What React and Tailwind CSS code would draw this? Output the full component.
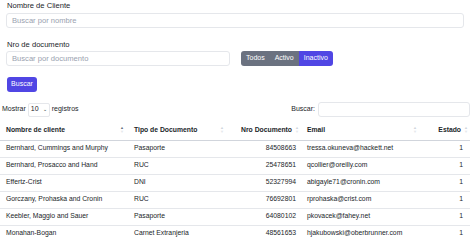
import React from 'react';

const rows = [
  ['Bernhard, Cummings and Murphy', 'Pasaporte', '84508663', 'tressa.okuneva@hackett.net', '1'],
  ['Bernhard, Prosacco and Hand', 'RUC', '25478651', 'qcollier@oreilly.com', '1'],
  ['Effertz-Crist', 'DNI', '52327994', 'abigayle71@cronin.com', '1'],
  ['Gorczany, Prohaska and Cronin', 'RUC', '76692801', 'rprohaska@crist.com', '1'],
  ['Keebler, Maggio and Sauer', 'Pasaporte', '64080102', 'pkovacek@fahey.net', '1'],
  ['Monahan-Bogan', 'Carnet Extranjeria', '48561653', 'hjakubowski@oberbrunner.com', '1'],
];

const SortIcon = ({ active }) => (
  <span className="flex flex-col items-center leading-none text-[4px]">
    <span className={active ? 'text-gray-500' : 'text-gray-300'}>▲</span>
    <span className="text-gray-200">▼</span>
  </span>
);

const App = () => {
  return (
    <div className="w-[474px] h-[242px] overflow-hidden bg-white text-[#212529] text-[7px] font-['Liberation_Sans',Arial,sans-serif]">
      <div className="pl-[6px] pr-[10px] pt-[1px] text-[7.6px]">
        <div className="pl-[1px] h-[12px] leading-[10px]">Nombre de Cliente</div>
        <div className="h-[15px] w-[458px] border border-gray-200 rounded-[3px] flex items-center px-[5px] text-gray-400">Buscar por nombre</div>
        <div className="pl-[1px] mt-[12px] h-[11px] leading-[10px]">Nro de documento</div>
        <div className="flex items-center gap-[11px]">
          <div className="h-[15px] w-[224px] border border-gray-200 rounded-[3px] flex items-center px-[5px] text-gray-400">Buscar por documento</div>
          <div className="flex h-[15px] rounded-[3px] overflow-hidden text-white text-[7px]">
            <span className="bg-[#6b7280] px-[5px] flex items-center">Todos</span>
            <span className="bg-[#6b7280] px-[5px] flex items-center">Activo</span>
            <span className="bg-[#5046e4] px-[5px] flex items-center">Inactivo</span>
          </div>
        </div>
        <button className="mt-[11px] ml-[1px] h-[15px] w-[30px] bg-[#5046e4] text-white rounded-[3px] flex items-center justify-center text-[7px]">Buscar</button>
      </div>
      <div className="flex items-center justify-between pl-[2px] pr-[4px] mt-[10px]">
        <div className="flex items-center gap-[2px]">
          <span>Mostrar</span>
          <span className="h-[14px] w-[22px] border border-gray-200 rounded-[2px] flex items-center justify-between px-[2px]">
            <span>10</span><span className="text-[5px]">⌄</span>
          </span>
          <span>registros</span>
        </div>
        <div className="flex items-center gap-[3px]">
          <span>Buscar:</span>
          <span className="h-[15px] w-[152px] border border-gray-200 rounded-[3px]"></span>
        </div>
      </div>
      <table className="mt-[4px] w-[470px] table-fixed border-collapse text-[6.8px]">
        <colgroup>
          <col className="w-[128px]" />
          <col className="w-[100px]" />
          <col className="w-[73px]" />
          <col className="w-[120px]" />
          <col className="w-[49px]" />
        </colgroup>
        <thead>
          <tr className="h-[19px] border-b border-gray-300">
            <th className="pl-[6px] pr-[4px] text-left font-semibold"><div className="flex justify-between items-center">Nombre de cliente<SortIcon active /></div></th>
            <th className="pl-[6px] pr-[4px] text-left font-semibold"><div className="flex justify-between items-center">Tipo de Documento<SortIcon /></div></th>
            <th className="pl-[4px] pr-[2px] font-semibold"><div className="flex justify-end gap-[3px] items-center">Nro Documento<SortIcon /></div></th>
            <th className="pl-[6px] pr-[4px] text-left font-semibold"><div className="flex justify-between items-center">Email<SortIcon /></div></th>
            <th className="pr-[2px] font-semibold"><div className="flex justify-end gap-[3px] items-center">Estado<SortIcon /></div></th>
          </tr>
        </thead>
        <tbody>
          {rows.map((r) => (
            <tr key={r[2]} className="h-[17px] border-b border-gray-200">
              <td className="pl-[6px]">{r[0]}</td>
              <td className="pl-[6px]">{r[1]}</td>
              <td className="text-right pr-[5px]">{r[2]}</td>
              <td className="pl-[6px]">{r[3]}</td>
              <td className="text-right pr-[7px]">{r[4]}</td>
            </tr>
          ))}
        </tbody>
      </table>
    </div>
  );
};

export default App;
